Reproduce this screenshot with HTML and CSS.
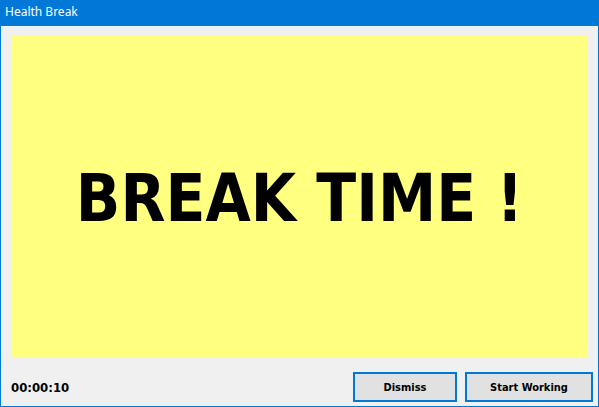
FILE: index.html
```html
<!DOCTYPE html>
<html lang="en">
<head>
    <meta charset="UTF-8">
    <meta name="viewport" content="width=device-width, initial-scale=1.0">
    <title>Health Break</title>
    <link rel="stylesheet" href="styles.css">
</head>
<body>
    <div class="janela">
        <div class="titulo">Health Break</div>
        <div class="conteudo">
            <div class="painel">
                <h1>BREAK TIME !</h1>
            </div>
            <div class="rodape">
                <span id="tempo" class="tempo">00:00:10</span>
                <div class="botoes">
                    <button class="botao dismiss" type="button">Dismiss</button>
                    <button class="botao start" type="button">Start Working</button>
                </div>
            </div>
        </div>
    </div>
</body>
</html>
```

FILE: styles.css
```css
body {
    margin: 0;
    padding: 0;
    background-color: #f0f0f0;
    font-family: "DejaVu Sans Condensed", "DejaVu Sans", sans-serif;
}

.janela {
    width: 599px;
    height: 407px;
    box-sizing: border-box;
    border: 1px solid #0078d7;
    border-top: none;
    display: flex;
    flex-direction: column;
}

.titulo {
    height: 26px;
    margin: 0 -1px;
    padding-left: 5px;
    background-color: #0078d7;
    color: white;
    font-family: "Noto Sans", "Open Sans", sans-serif;
    font-size: 12px;
    line-height: 23px;
}

.conteudo {
    flex: 1;
    display: flex;
    flex-direction: column;
    padding: 10px 5px 4px 10px;
}

.painel {
    height: 321px;
    margin-right: 5px;
    background-color: #ffff80;
    display: flex;
    align-items: center;
    justify-content: center;
}

h1 {
    margin: 0;
    font-size: 65px;
    font-weight: bold;
    color: black;
    padding-top: 4px;
}

.rodape {
    margin-top: 15px;
    height: 30px;
    display: flex;
    align-items: center;
    justify-content: space-between;
}

.tempo {
    font-size: 13px;
    font-weight: bold;
    color: black;
    padding-top: 1px;
}

.botoes {
    display: flex;
    gap: 8px;
}

.botao {
    height: 30px;
    border: 2px solid #0078d7;
    background-color: #e1e1e1;
    color: black;
    font-family: inherit;
    font-size: 11px;
    font-weight: bold;
    padding: 0;
}

.dismiss {
    width: 104px;
}

.start {
    width: 128px;
}
```
